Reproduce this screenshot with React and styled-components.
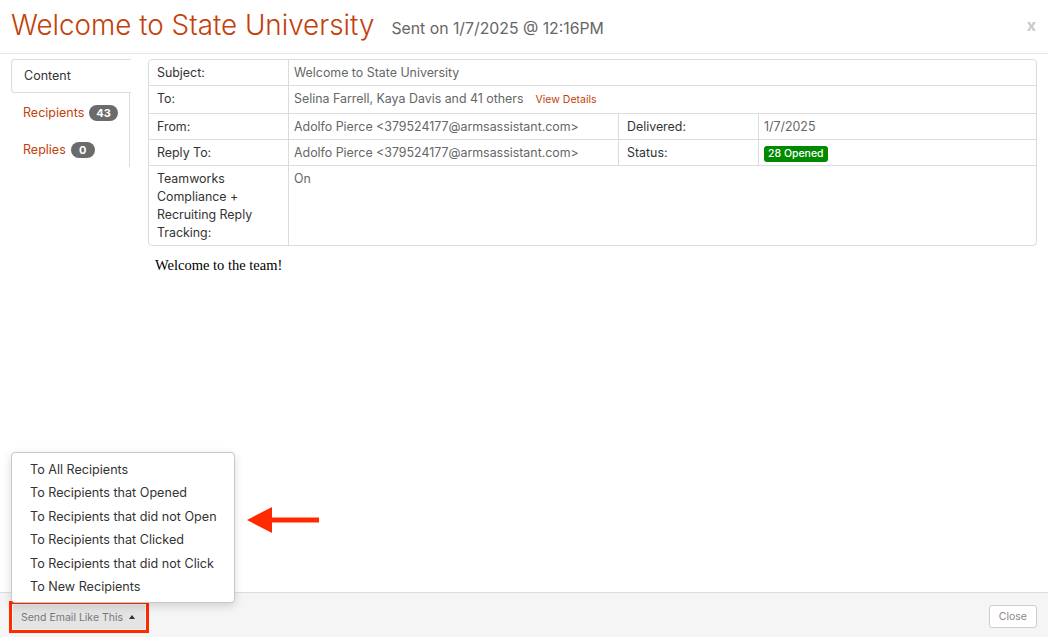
import React from 'react'
import styled, { createGlobalStyle } from 'styled-components'

const orange = '#c2410c'
const line = '#dcdcdc'

const GlobalStyle = createGlobalStyle`
  html, body {
    margin: 0;
    padding: 0;
    background: #fff;
  }
  body {
    font-family: Inter, 'Liberation Sans', sans-serif;
    color: #333;
  }
`

const Modal = styled.div`
  height: 100vh;
  display: flex;
  flex-direction: column;
  overflow: hidden;
`

const Header = styled.header`
  height: 54px;
  flex: none;
  display: flex;
  align-items: center;
  padding: 0 11px 3px;
  border-bottom: 1px solid #e8e8e8;
  box-sizing: border-box;
`

const Title = styled.h1`
  margin: 0;
  font-size: 27.8px;
  font-weight: 300;
  color: ${orange};
`

const SentOn = styled.span`
  margin-left: 17px;
  margin-top: 7px;
  font-size: 15.8px;
  color: #666;
`

const Dismiss = styled.span`
  margin-left: auto;
  margin-right: 1px;
  font-size: 16px;
  font-weight: 700;
  color: #c8c8c8;
`

const Body = styled.main`
  flex: 1;
  display: flex;
  gap: 17px;
  padding: 5px 11px 0;
`

const TabList = styled.nav`
  width: 120px;
  flex: none;
  display: flex;
  flex-direction: column;
  align-self: flex-start;
`

const Tab = styled.div`
  height: ${p => (p.active ? '34px' : '37px')};
  padding-top: ${p => (p.active ? '0' : '2px')};
  padding-bottom: ${p => (p.active ? '2px' : '0')};
  display: flex;
  align-items: center;
  gap: 5px;
  padding-left: 12px;
  font-size: 12.5px;
  box-sizing: border-box;
  color: ${p => (p.active ? '#333' : orange)};
  ${p => p.active
    ? `border: 1px solid ${line}; border-right: 0; border-radius: 4px 0 0 4px;`
    : `border-right: 1px solid ${line}; margin-right: 1px;`}
`

const Count = styled.span`
  display: inline-block;
  min-width: 10px;
  padding: 2px 7px;
  border-radius: 9px;
  background: #6b6b6b;
  color: #fff;
  font-size: 11px;
  font-weight: 700;
  line-height: 12px;
  text-align: center;
`

const Content = styled.section`
  flex: 1;
  display: flex;
  flex-direction: column;
`

const Table = styled.table`
  width: 100%;
  border-collapse: separate;
  border-spacing: 0;
  border: 1px solid ${line};
  border-radius: 4px;
  font-size: 12.4px;
  line-height: 18px;

  td {
    padding: 4px 8px 3.3px;
    vertical-align: top;
    border-top: 1px solid ${line};
    border-left: 1px solid ${line};
  }
  tr:first-child td { border-top: 0; }
  td:first-child { border-left: 0; }
`

const Label = styled.td`
  width: 123px;
  color: #333;
`

const Value = styled.td`
  color: #666;
  && { padding-left: 5px; }
`

const Link = styled.a`
  margin-left: 12px;
  font-size: 10.5px;
  color: ${orange};
  text-decoration: none;
`

const Status = styled.span`
  display: inline-block;
  padding: 1px 4px;
  border-radius: 3px;
  background: #008a00;
  color: #fff;
  font-size: 10.5px;
  font-weight: 500;
  line-height: 14px;
`

const Message = styled.p`
  margin: 11px 0 0 7px;
  font-family: 'Liberation Serif', 'Times New Roman', serif;
  font-size: 14.5px;
  color: #000;
`

const Footer = styled.footer`
  height: 45px;
  flex: none;
  display: flex;
  align-items: flex-start;
  justify-content: space-between;
  padding: 12px 11px 0 13px;
  background: #f5f5f5;
  border-top: 1px solid #ddd;
  box-sizing: border-box;
`

const DropUp = styled.div`
  position: relative;
`

const SendButton = styled.button`
  height: 24px;
  padding: 0 8px 0 8px;
  display: flex;
  align-items: center;
  gap: 6px;
  border: 0;
  background: #e4e4e4;
  color: #777;
  font-family: inherit;
  font-size: 10.5px;
  outline: 3px solid #ff2a00;
  outline-offset: 1px;

  &::after {
    content: '';
    margin-right: 2px;
    border-left: 3px solid transparent;
    border-right: 3px solid transparent;
    border-bottom: 4px solid #333;
  }
`

const Menu = styled.ul`
  position: absolute;
  left: -2px;
  bottom: calc(100% + 2px);
  width: 222px;
  margin: 0;
  padding: 5.5px 0 3.5px;
  list-style: none;
  background: #fff;
  border: 1px solid #c8c8c8;
  border-radius: 4px;
  box-shadow: 0 3px 10px rgba(0, 0, 0, 0.15);
  font-size: 12.6px;
  color: #333;
`

const MenuItem = styled.li`
  padding: 0 18px;
  line-height: 23.4px;
  white-space: nowrap;
`

const Pointer = styled.svg`
  position: absolute;
  left: 247px;
  top: 506px;
`

const CloseButton = styled.button`
  height: 23px;
  padding: 0 9px;
  background: #fff;
  border: 1px solid #ccc;
  border-radius: 3px;
  color: #888;
  font-family: inherit;
  font-size: 10.5px;
`

const resendOptions = [
  'To All Recipients',
  'To Recipients that Opened',
  'To Recipients that did not Open',
  'To Recipients that Clicked',
  'To Recipients that did not Click',
  'To New Recipients',
]

export default function App() {
  return (
    <Modal>
      <GlobalStyle />
      <Header>
        <Title>Welcome to State University</Title>
        <SentOn>Sent on 1/7/2025 @ 12:16PM</SentOn>
        <Dismiss>x</Dismiss>
      </Header>

      <Body>
        <TabList>
          <Tab active>Content</Tab>
          <Tab>Recipients <Count>43</Count></Tab>
          <Tab>Replies <Count>0</Count></Tab>
        </TabList>

        <Content>
          <Table>
            <tbody>
              <tr>
                <Label>Subject:</Label>
                <Value colSpan={3}>Welcome to State University</Value>
              </tr>
              <tr>
                <Label>To:</Label>
                <Value colSpan={3}>
                  Selina Farrell, Kaya Davis and 41 others
                  <Link href="#">View Details</Link>
                </Value>
              </tr>
              <tr>
                <Label>From:</Label>
                <Value style={{ width: 316 }}>Adolfo Pierce &lt;379524177@armsassistant.com&gt;</Value>
                <Label>Delivered:</Label>
                <Value>1/7/2025</Value>
              </tr>
              <tr>
                <Label>Reply To:</Label>
                <Value>Adolfo Pierce &lt;379524177@armsassistant.com&gt;</Value>
                <Label>Status:</Label>
                <Value><Status>28 Opened</Status></Value>
              </tr>
              <tr>
                <Label>Teamworks Compliance + Recruiting Reply Tracking:</Label>
                <Value colSpan={3}>On</Value>
              </tr>
            </tbody>
          </Table>
          <Message>Welcome to the team!</Message>
        </Content>
      </Body>

      <Footer>
        <DropUp>
          <Menu>
            {resendOptions.map(o => <MenuItem key={o}>{o}</MenuItem>)}
          </Menu>
          <SendButton>Send Email Like This</SendButton>
        </DropUp>
        <CloseButton>Close</CloseButton>
      </Footer>

      <Pointer width="74" height="28" viewBox="0 0 74 28">
        <path d="M0 14 L25 1 L25 11.5 L72 11.5 L72 16.5 L25 16.5 L25 27 Z" fill="#ff2a00" />
      </Pointer>
    </Modal>
  )
}
